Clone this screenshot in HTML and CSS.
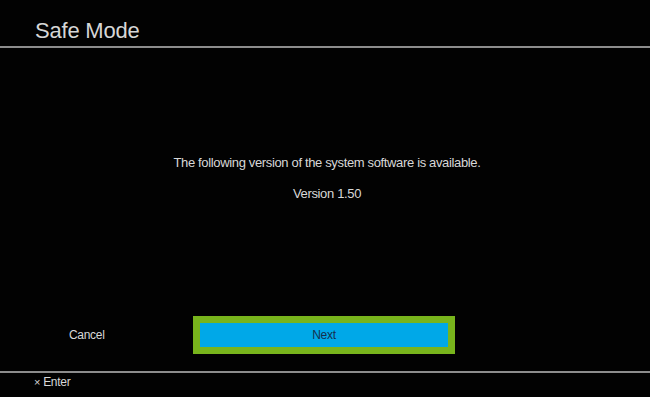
FILE: index.html
```html
<!DOCTYPE html>
<html lang="en">
<head>
	<meta charset="UTF-8">
	<title>Safe Mode</title>
	<link rel="stylesheet" href="styles.css">
</head>
<body>
	<div class="screen">
		<div class="header">
			<h1 class="title">Safe Mode</h1>
		</div>
		<div class="message">
			<p class="line">The following version of the system software is available.</p>
			<p class="line version">Version 1.50</p>
		</div>
		<div class="actions">
			<div class="cancel">Cancel</div>
			<div class="next">
				<div class="next-inner">Next</div>
			</div>
		</div>
		<div class="footer">
			<span class="cross">&times;</span> Enter
		</div>
	</div>
</body>
</html>
```

FILE: styles.css
```css
body{
	margin:0;
	background:#000;
	font-family:"Liberation Sans", Arial, sans-serif;
	color:#d8d8d8;
}
.screen{
	width:650px;
	height:397px;
	display:flex;
	flex-direction:column;
	background:#020202;
}
.header{
	height:46px;
	border-bottom:2px solid #8c8c8c;
	display:flex;
	align-items:flex-end;
	padding-left:35px;
}
.title{
	margin:0 0 2px 0;
	font-weight:normal;
	font-size:22px;
	line-height:26px;
	color:#d6d6d6;
	letter-spacing:-0.2px;
}
.message{
	height:268px;
	text-align:center;
	padding-top:107px;
	box-sizing:border-box;
	padding-left:4px;
}
.line{
	margin:0;
	font-size:13px;
	line-height:16px;
	letter-spacing:-0.35px;
}
.version{
	margin-top:15px;
}
.actions{
	height:55px;
	display:flex;
	align-items:flex-start;
}
.cancel{
	width:193px;
	box-sizing:border-box;
	padding-left:69px;
	font-size:12px;
	line-height:38px;
	letter-spacing:-0.3px;
}
.next{
	width:248px;
	height:24px;
	border:7px solid #78b41c;
	background:#00a8e8;
	display:flex;
	justify-content:center;
	align-items:center;
}
.next-inner{
	font-size:12px;
	color:#16304d;
	letter-spacing:-0.3px;
}
.footer{
	border-top:2px solid #8c8c8c;
	flex:1;
	padding-left:34px;
	font-size:12px;
	line-height:19px;
	letter-spacing:-0.3px;
}
.cross{
	font-size:11px;
}
```
